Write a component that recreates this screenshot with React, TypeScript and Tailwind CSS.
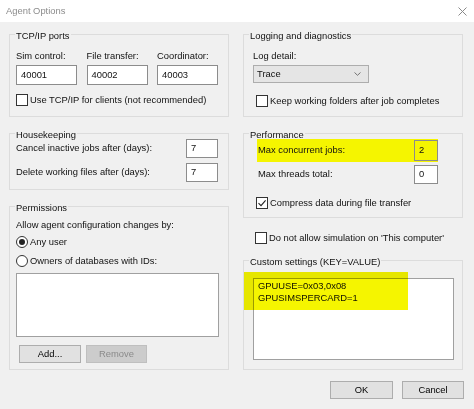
import React from 'react'

type GroupProps = {
  label: string
  className?: string
  inner?: string
  children: React.ReactNode
}

function Group({ label, className = '', inner = '', children }: GroupProps) {
  return (
    <div className={`relative border border-[#dcdcdc] ${className}`}>
      <div className="-mt-[6px] ml-[5px] w-fit bg-[#f0f0f0] px-px leading-[14px]">{label}</div>
      <div className={inner}>{children}</div>
    </div>
  )
}

function CheckBox({ checked = false, label, className = '' }: { checked?: boolean; label: string; className?: string }) {
  return (
    <div className={`flex h-[13px] items-center ${className}`}>
      <div className="flex h-[12px] w-[12px] items-center justify-center border border-[#333] bg-white">
        {checked && (
          <svg width="10" height="10" viewBox="0 0 10 10">
            <path d="M1.5 5.2 L4 7.6 L8.6 2.4" fill="none" stroke="#222" strokeWidth="1.1" />
          </svg>
        )}
      </div>
      <span className="ml-[2px] leading-[13px]">{label}</span>
    </div>
  )
}

function Radio({ checked = false, label, className = '' }: { checked?: boolean; label: string; className?: string }) {
  return (
    <div className={`flex h-[14px] items-center ${className}`}>
      <div className="flex h-[12px] w-[12px] items-center justify-center rounded-full border border-[#333] bg-white">
        {checked && <div className="h-[6px] w-[6px] rounded-full bg-[#222]" />}
      </div>
      <span className="ml-[2px] leading-[14px]">{label}</span>
    </div>
  )
}

function Field({ value, className = '' }: { value: string; className?: string }) {
  return (
    <div className={`flex items-center border border-[#8c8c8c] bg-white pl-[4px] ${className}`}>
      {value}
    </div>
  )
}

function Button({ label, disabled = false, className = '' }: { label: string; disabled?: boolean; className?: string }) {
  return (
    <div
      className={`flex h-[18px] items-center justify-center border ${
        disabled ? 'border-[#bfbfbf] bg-[#cccccc] text-[#8a8a8a]' : 'border-[#adadad] bg-[#e1e1e1] text-black'
      } ${className}`}
    >
      {label}
    </div>
  )
}

function App() {
  const ports = [
    { label: 'Sim control:', value: '40001' },
    { label: 'File transfer:', value: '40002' },
    { label: 'Coordinator:', value: '40003' }
  ]

  return (
    <div className="h-[409px] w-[474px] overflow-hidden bg-[#f0f0f0] font-['Liberation_Sans',Arial,sans-serif] text-[9.4px] text-[#111]">
      {/* title bar */}
      <div className="flex h-[22px] items-center justify-between bg-white pl-[6px] pr-[7px]">
        <span className="text-[#8c8c8c]">Agent Options</span>
        <svg width="9" height="9" viewBox="0 0 9 9">
          <path d="M0.5 0.5 L8.5 8.5 M8.5 0.5 L0.5 8.5" stroke="#8a8a8a" strokeWidth="1" />
        </svg>
      </div>

      <div className="flex gap-[14px] pl-[9px] pt-[12px]">
        {/* left column */}
        <div className="flex w-[220px] flex-col">
          <Group label="TCP/IP ports" className="pb-[10px]" inner="pl-[6px]">
            <div className="mt-[6px] flex gap-[9.5px]">
              {ports.map((p) => (
                <div key={p.label} className="flex w-[61px] flex-col">
                  <span className="leading-[14px]">{p.label}</span>
                  <Field value={p.value} className="mt-[2px] h-[20px]" />
                </div>
              ))}
            </div>
            <CheckBox label="Use TCP/IP for clients (not recommended)" className="mt-[8px]" />
          </Group>

          <Group label="Housekeeping" className="mt-[16px] pb-[7px]" inner="pl-[6px] pr-[10px]">
            <div className="-mt-[3px] flex h-[19px] items-center justify-between">
              <span>Cancel inactive jobs after (days):</span>
              <Field value="7" className="h-[19px] w-[32px]" />
            </div>
            <div className="mt-[5px] flex h-[19px] items-center justify-between">
              <span>Delete working files after (days):</span>
              <Field value="7" className="h-[19px] w-[32px]" />
            </div>
          </Group>

          <Group label="Permissions" className="mt-[16px] pb-[6px]" inner="pl-[6px]">
            <div className="mt-[3px] leading-[14px]">Allow agent configuration changes by:</div>
            <Radio checked label="Any user" className="mt-[3px]" />
            <Radio label="Owners of databases with IDs:" className="mt-[5px]" />
            <div className="mt-[5px] h-[64px] w-[203px] border border-[#a0a0a0] bg-white" />
            <div className="ml-[3px] mt-[8px] flex gap-[5px]">
              <Button label="Add..." className="w-[62px]" />
              <Button label="Remove" disabled className="w-[61px]" />
            </div>
          </Group>
        </div>

        {/* right column */}
        <div className="flex w-[220px] flex-col">
          <Group label="Logging and diagnostics" className="pb-[9px]" inner="pl-[9px]">
            <div className="mt-[6px] leading-[14px]">Log detail:</div>
            <div className="mt-[2px] flex h-[18px] w-[116px] items-center justify-between border border-[#adadad] bg-[#e5e5e5] pl-[3px] pr-[7px]">
              <span>Trace</span>
              <svg width="7" height="4" viewBox="0 0 7 4">
                <path d="M0.5 0.5 L3.5 3.3 L6.5 0.5" fill="none" stroke="#666" strokeWidth="0.9" />
              </svg>
            </div>
            <CheckBox label="Keep working folders after job completes" className="ml-[3px] mt-[11px]" />
          </Group>

          <Group label="Performance" className="mt-[16px] pb-[8px]" inner="pl-[13px]">
            <div className="-mt-[3px] flex h-[23px] w-[181px] items-center justify-between bg-[#f5f500] pl-px">
              <span>Max concurrent jobs:</span>
              <div className="flex h-[21px] w-[24px] items-center border border-[#8c8c8c] pl-[4px]">2</div>
            </div>
            <div className="mt-[3px] flex h-[19px] w-[181px] items-center justify-between pl-px">
              <span>Max threads total:</span>
              <Field value="0" className="h-[19px] w-[24px]" />
            </div>
            <CheckBox checked label="Compress data during file transfer" className="-ml-px mt-[12px]" />
          </Group>

          <CheckBox label="Do not allow simulation on 'This computer'" className="ml-[12px] mt-[13px]" />

          <Group label="Custom settings (KEY=VALUE)" className="mt-[16px] pb-[9px]" inner="pl-[9px]">
            <div className="mt-[9px] h-[82px] w-[201px] border border-[#a0a0a0] bg-white pl-[4px] pt-[1px] leading-[12px]">
              <div>GPUUSE=0x03,0x08</div>
              <div>GPUSIMSPERCARD=1</div>
            </div>
            {/* highlighter mark laid over the settings box */}
            <div className="absolute left-0 top-[11px] h-[38px] w-[164px] bg-[#f5f500] mix-blend-multiply" />
          </Group>
        </div>
      </div>

      {/* dialog buttons */}
      <div className="mt-[11px] flex justify-end gap-[9px] pr-[10px]">
        <Button label="OK" className="w-[63px]" />
        <Button label="Cancel" className="w-[62px]" />
      </div>
    </div>
  )
}

export default App
